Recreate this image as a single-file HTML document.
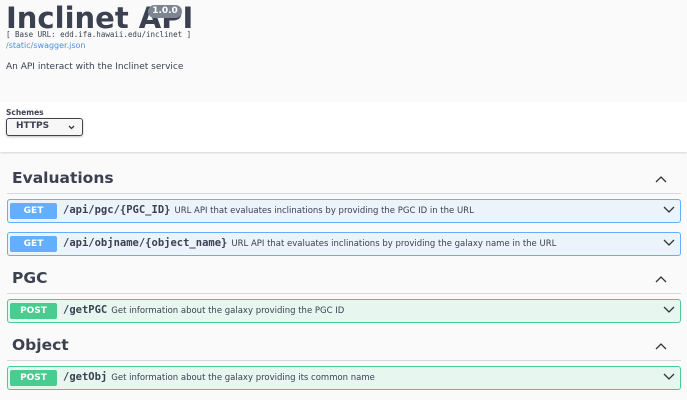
<!DOCTYPE html>
<html><head><style>
body{margin:0;width:687px;height:400px;background:#fafafa;font-family:"DejaVu Sans","Liberation Sans",sans-serif;color:#3b4151;position:relative;overflow:hidden}
.a{position:absolute;white-space:nowrap}
.mono{font-family:"DejaVu Sans Mono","Liberation Mono",monospace}
.h{font-size:15.5px;font-weight:bold;left:12px}
.line{position:absolute;left:7px;width:674px;height:1px;background:#d6d8dc}
.op{position:absolute;left:7px;width:672px;height:22px;border-radius:3px;border:1px solid}
.get{background:#ebf3fb;border-color:#61affe}
.post{background:#e8f6f0;border-color:#49cc90}
.b{position:absolute;left:2px;top:3px;width:47px;height:16px;border-radius:2px;color:#fff;font-weight:bold;font-size:9px;text-align:center;line-height:16px}
.get .b{background:#61affe}.post .b{background:#49cc90}
.p{position:absolute;left:55px;top:4px;font-size:10.5px;font-weight:bold;font-family:"DejaVu Sans Mono",monospace;white-space:nowrap}
.p span{font-family:"DejaVu Sans",sans-serif;font-weight:normal;font-size:8.5px;margin-left:4px;color:#3b4151}
.chev{position:absolute;right:5px;top:6px}
.up{position:absolute;left:655px}
</style></head><body>
<div class="a" style="left:6px;top:0;font-size:29px;font-weight:bold;line-height:36px">Inclinet API</div>
<div class="a" style="left:148px;top:5px;width:34px;height:13px;border-radius:7px;background:#7d8492;color:#fff;font-size:9px;font-weight:bold;text-align:center;line-height:13px">1.0.0</div>
<div class="a mono" style="left:6px;top:30px;font-size:7.5px">[ Base URL: edd.ifa.hawaii.edu/inclinet ]</div>
<div class="a" style="left:6px;top:41px;font-size:8px;color:#4990e2">/static/swagger.json</div>
<div class="a" style="left:6px;top:62px;font-size:9px">An API interact with the Inclinet service</div>
<div class="a" style="left:0;top:102px;width:687px;height:50px;background:#fff;box-shadow:0 1px 2px rgba(0,0,0,.15)"></div>
<div class="a" style="left:6px;top:108px;font-size:7.5px;font-weight:bold">Schemes</div>
<div class="a" style="left:6px;top:118px;width:75px;height:16px;border:1px solid #41444e;border-radius:3px;background:#f7f7f7;box-shadow:0 1px 2px rgba(0,0,0,.25)"><span style="position:absolute;left:9px;top:2px;font-size:9px;font-weight:bold">HTTPS</span><svg style="position:absolute;left:61px;top:6px" width="7" height="5" viewBox="0 0 7 5"><path d="M1 1l2.5 2.5L6 1" fill="none" stroke="#333" stroke-width="1.3"/></svg></div>

<div class="a h" style="top:169px">Evaluations</div>
<svg class="up a" style="top:175px" width="12" height="8"><path d="M1 7l5-5 5 5" fill="none" stroke="#333" stroke-width="1.3"/></svg>
<div class="line" style="top:193px"></div>
<div class="op get" style="top:199px"><div class="b">GET</div><div class="p">/api/pgc/{PGC_ID}<span>URL API that evaluates inclinations by providing the PGC ID in the URL</span></div><svg class="chev" width="12" height="8"><path d="M1 1l5 5 5-5" fill="none" stroke="#333" stroke-width="1.3"/></svg></div>
<div class="op get" style="top:232px"><div class="b">GET</div><div class="p">/api/objname/{object_name}<span>URL API that evaluates inclinations by providing the galaxy name in the URL</span></div><svg class="chev" width="12" height="8"><path d="M1 1l5 5 5-5" fill="none" stroke="#333" stroke-width="1.3"/></svg></div>

<div class="a h" style="top:269px">PGC</div>
<svg class="up a" style="top:275px" width="12" height="8"><path d="M1 7l5-5 5 5" fill="none" stroke="#333" stroke-width="1.3"/></svg>
<div class="line" style="top:293px"></div>
<div class="op post" style="top:299px"><div class="b">POST</div><div class="p">/getPGC<span>Get information about the galaxy providing the PGC ID</span></div><svg class="chev" width="12" height="8"><path d="M1 1l5 5 5-5" fill="none" stroke="#333" stroke-width="1.3"/></svg></div>

<div class="a h" style="top:336px">Object</div>
<svg class="up a" style="top:342px" width="12" height="8"><path d="M1 7l5-5 5 5" fill="none" stroke="#333" stroke-width="1.3"/></svg>
<div class="line" style="top:360px"></div>
<div class="op post" style="top:366px"><div class="b">POST</div><div class="p">/getObj<span>Get information about the galaxy providing its common name</span></div><svg class="chev" width="12" height="8"><path d="M1 1l5 5 5-5" fill="none" stroke="#333" stroke-width="1.3"/></svg></div>
</body></html>
